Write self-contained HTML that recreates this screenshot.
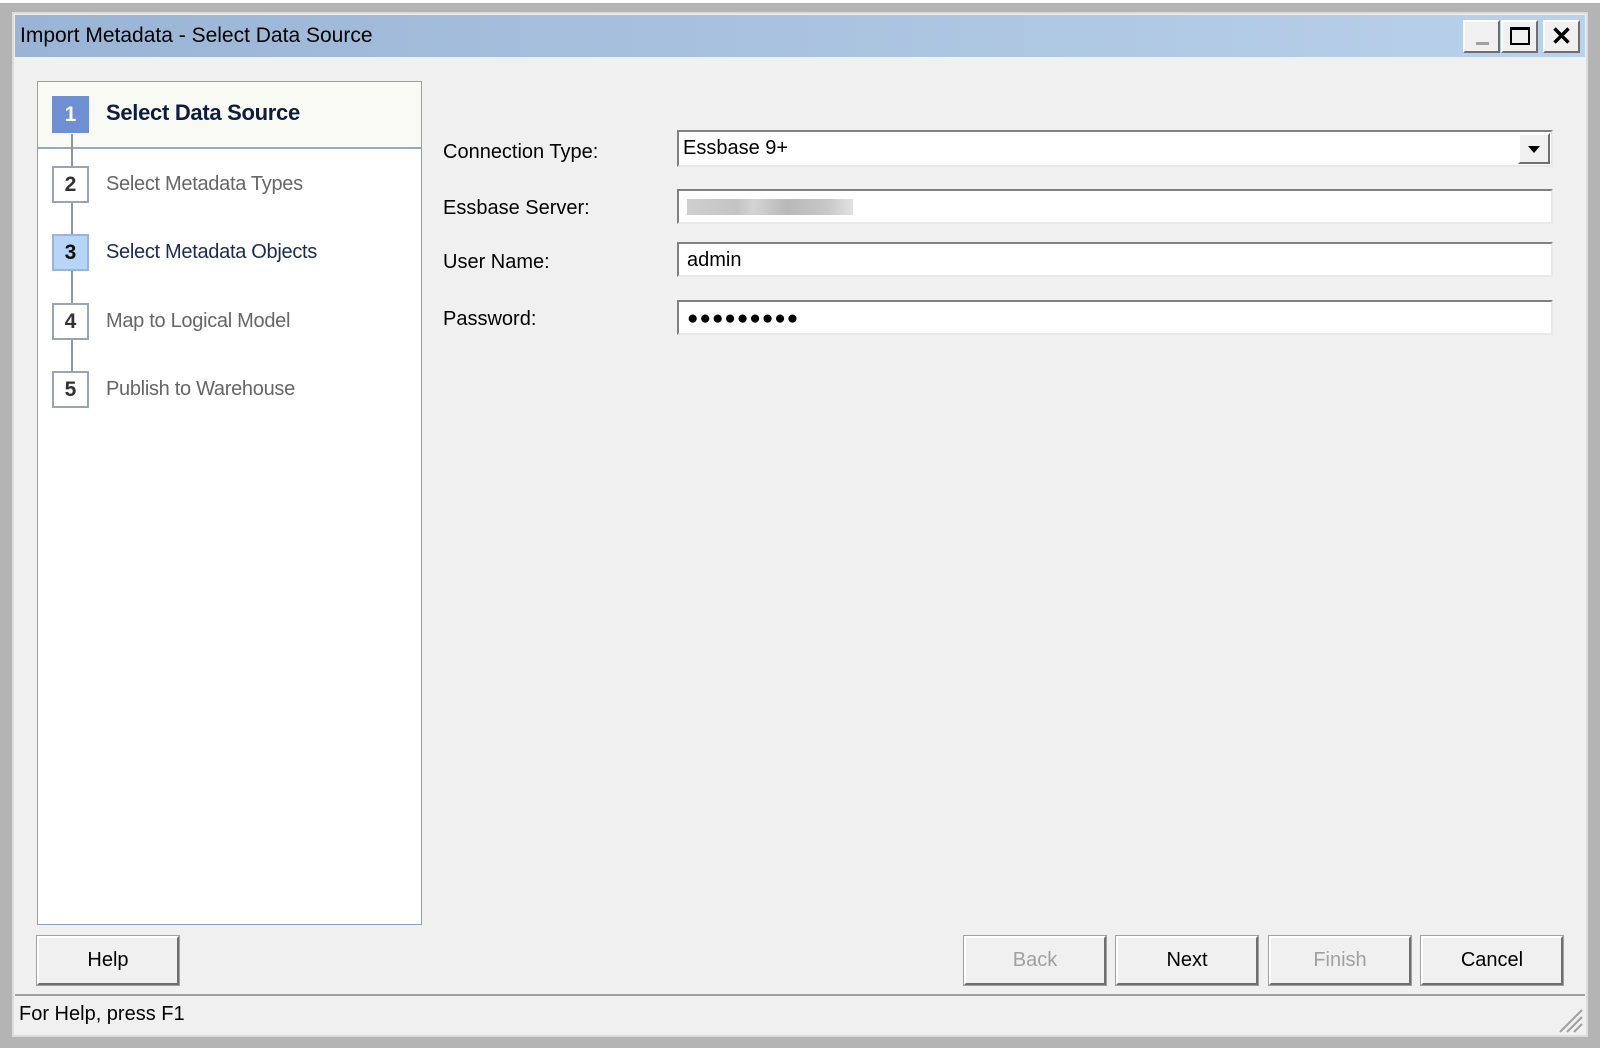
<!DOCTYPE html>
<html><head><style>
*{margin:0;padding:0;box-sizing:border-box}
body{width:1600px;height:1048px;background:#b4b4b4;position:relative;overflow:hidden;font-family:"Liberation Sans",sans-serif;color:#000}
.a{position:absolute}
.win{left:12px;top:12px;width:1576px;height:1025px;background:#f0f0f0;border:2px solid #dcdcdc}
.title{left:15px;top:15px;width:1570px;height:42px;background:linear-gradient(90deg,#9ab4d5,#b9d1ea);font-size:21px;line-height:42px;padding-left:5px}
.cb{top:20px;width:37px;height:33px;background:#f0f0f0;border:2px solid;border-color:#fff #6e6e6e #6e6e6e #fff}
.panel{left:37px;top:81px;width:385px;height:844px;background:#fff;border:1px solid #8ea2c0}
.hdr{left:0;top:0;width:383px;height:67px;background:#fafaf5;border-bottom:2px solid #9aa8c0}
.vl{left:33px;top:52px;width:2px;height:240px;background:#8c96aa}
.sb{left:14px;width:37px;height:37px;border:2px solid #9aa4b8;background:#fff;font-weight:bold;font-size:21px;text-align:center;line-height:33px;color:#333}
.st{left:68px;font-size:20px;color:#666;letter-spacing:-0.3px}
.lbl{left:443px;font-size:20px}
.in{left:677px;width:876px;background:#fff;border:2px solid;border-color:#808080 #e8e8e8 #e8e8e8 #808080;font-size:20px;padding-left:8px}
.btn{top:936px;width:142px;height:49px;background:#f0f0f0;border:2px solid;border-color:#fff #6e6e6e #6e6e6e #fff;font-size:20px;text-align:center;line-height:45px;outline:1px solid #a0a0a0}
</style></head><body>
<div class="a" style="left:0;top:0;width:1600px;height:3px;background:#fff"></div>
<div class="a win"></div>
<div class="a title">Import Metadata - Select Data Source</div>
<div class="a cb" style="left:1463px"><div class="a" style="left:11px;top:20px;width:13px;height:3px;background:#a0a0a0"></div></div>
<div class="a cb" style="left:1501px"><div class="a" style="left:7px;top:5px;width:20px;height:18px;border:2px solid #000;border-top-width:3px"></div></div>
<div class="a cb" style="left:1543px;font-size:26px;font-weight:bold;text-align:center;line-height:28px">✕</div>
<div class="a panel">
 <div class="a hdr"></div>
 <div class="a vl"></div>
 <div class="a sb" style="top:14px;background:#6f8fd3;border-color:#6f8fd3;color:#fff">1</div>
 <div class="a st" style="top:18px;font-weight:bold;font-size:22px;color:#0e1d3d">Select Data Source</div>
 <div class="a sb" style="top:84px">2</div><div class="a st" style="top:91px">Select Metadata Types</div>
 <div class="a sb" style="top:152px;background:#b6d5f7;border-color:#9ab4d5;color:#111">3</div><div class="a st" style="top:159px;color:#1a2a55">Select Metadata Objects</div>
 <div class="a sb" style="top:221px">4</div><div class="a st" style="top:228px">Map to Logical Model</div>
 <div class="a sb" style="top:289px">5</div><div class="a st" style="top:296px">Publish to Warehouse</div>
</div>
<div class="a lbl" style="top:141px">Connection Type:</div>
<div class="a lbl" style="top:197px">Essbase Server:</div>
<div class="a lbl" style="top:251px">User Name:</div>
<div class="a lbl" style="top:308px">Password:</div>
<div class="a in" style="top:130px;height:37px;line-height:33px;padding-left:4px">Essbase 9+
 <div class="a" style="right:1px;top:1px;width:32px;height:31px;background:#f0f0f0;border:2px solid;border-color:#fff #6e6e6e #6e6e6e #fff"><div class="a" style="left:8px;top:11px;border-left:6px solid transparent;border-right:6px solid transparent;border-top:7px solid #000"></div></div></div>
<div class="a in" style="top:189px;height:35px"><div class="a" style="left:8px;top:8px;width:166px;height:16px;background:linear-gradient(90deg,#cfcfcf,#c4c4c4 30%,#d4d4d4 40%,#b8b8b8 60%,#c8c8c8 85%,#e2e2e2)"></div></div>
<div class="a in" style="top:242px;height:35px;line-height:33px">admin</div>
<div class="a in" style="top:300px;height:35px;line-height:33px;font-size:19px;letter-spacing:1px">●●●●●●●●●</div>
<div class="a btn" style="left:37px">Help</div>
<div class="a btn" style="left:964px;color:#a0a0a0">Back</div>
<div class="a btn" style="left:1116px">Next</div>
<div class="a btn" style="left:1269px;color:#a0a0a0">Finish</div>
<div class="a btn" style="left:1421px">Cancel</div>
<div class="a" style="left:15px;top:994px;width:1570px;height:2px;background:#a0a0a0"></div>
<div class="a" style="left:19px;top:1000px;font-size:20px;line-height:28px">For Help, press F1</div>
<svg class="a" style="left:1556px;top:1006px" width="28" height="28"><g stroke="#a0a0a0" stroke-width="2"><line x1="4" y1="26" x2="26" y2="4"/><line x1="11" y1="26" x2="26" y2="11"/><line x1="18" y1="26" x2="26" y2="18"/></g></svg>
</body></html>
